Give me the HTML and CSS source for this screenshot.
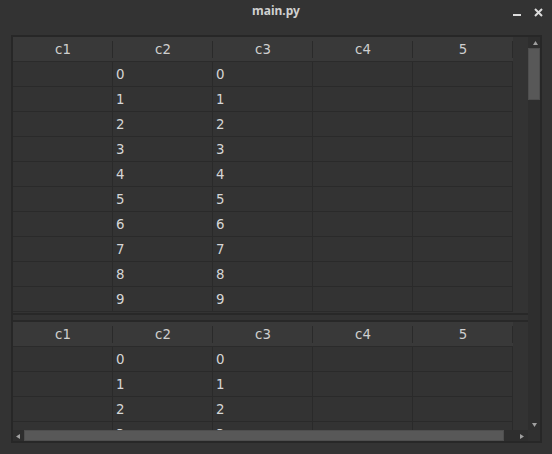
FILE: index.html
```html
<!DOCTYPE html>
<html>
<head>
<meta charset="utf-8">
<link rel="stylesheet" href="styles.css">
</head>
<body>
<div class="titlebar">
  <div class="tb-side"></div>
  <div class="tb-title">main.py</div>
  <div class="tb-side tb-buttons">
    <svg class="btn-min" width="8" height="2" viewBox="0 0 8 2"><rect x="0" y="0" width="8" height="2" fill="#dcdcdc"/></svg>
    <svg class="btn-close" width="9" height="9" viewBox="0 0 9 9"><path d="M1 1 L8 8 M8 1 L1 8" stroke="#dcdcdc" stroke-width="2" fill="none"/></svg>
  </div>
</div>
<div class="frame">
  <div class="viewport">
    <div class="table first">
      <div class="hdr">
        <div class="hcell">c1</div><div class="hcell">c2</div><div class="hcell">c3</div><div class="hcell">c4</div><div class="hcell">5</div>
      </div>
      <div class="row"><div class="cell"></div><div class="cell">0</div><div class="cell">0</div><div class="cell"></div><div class="cell"></div></div>
      <div class="row"><div class="cell"></div><div class="cell">1</div><div class="cell">1</div><div class="cell"></div><div class="cell"></div></div>
      <div class="row"><div class="cell"></div><div class="cell">2</div><div class="cell">2</div><div class="cell"></div><div class="cell"></div></div>
      <div class="row"><div class="cell"></div><div class="cell">3</div><div class="cell">3</div><div class="cell"></div><div class="cell"></div></div>
      <div class="row"><div class="cell"></div><div class="cell">4</div><div class="cell">4</div><div class="cell"></div><div class="cell"></div></div>
      <div class="row"><div class="cell"></div><div class="cell">5</div><div class="cell">5</div><div class="cell"></div><div class="cell"></div></div>
      <div class="row"><div class="cell"></div><div class="cell">6</div><div class="cell">6</div><div class="cell"></div><div class="cell"></div></div>
      <div class="row"><div class="cell"></div><div class="cell">7</div><div class="cell">7</div><div class="cell"></div><div class="cell"></div></div>
      <div class="row"><div class="cell"></div><div class="cell">8</div><div class="cell">8</div><div class="cell"></div><div class="cell"></div></div>
      <div class="row"><div class="cell"></div><div class="cell">9</div><div class="cell">9</div><div class="cell"></div><div class="cell"></div></div>
    </div>
    <div class="table second">
      <div class="hdr">
        <div class="hcell">c1</div><div class="hcell">c2</div><div class="hcell">c3</div><div class="hcell">c4</div><div class="hcell">5</div>
      </div>
      <div class="row"><div class="cell"></div><div class="cell">0</div><div class="cell">0</div><div class="cell"></div><div class="cell"></div></div>
      <div class="row"><div class="cell"></div><div class="cell">1</div><div class="cell">1</div><div class="cell"></div><div class="cell"></div></div>
      <div class="row"><div class="cell"></div><div class="cell">2</div><div class="cell">2</div><div class="cell"></div><div class="cell"></div></div>
      <div class="row"><div class="cell"></div><div class="cell">3</div><div class="cell">3</div><div class="cell"></div><div class="cell"></div></div>
    </div>
  </div>
  <div class="vbar">
    <div class="arrow-box up"><svg width="5" height="4" viewBox="0 0 5 4"><path d="M2.5 0 L5 4 L0 4 Z" fill="#a0a0a0"/></svg></div>
    <div class="vhandle"></div>
    <div class="spacer"></div>
    <div class="arrow-box down"><svg width="5" height="4" viewBox="0 0 5 4"><path d="M0 0 L5 0 L2.5 4 Z" fill="#a0a0a0"/></svg></div>
  </div>
  <div class="hbar">
    <div class="arrow-box left"><svg width="4" height="5" viewBox="0 0 4 5"><path d="M0 2.5 L4 0 L4 5 Z" fill="#a0a0a0"/></svg></div>
    <div class="hhandle"></div>
    <div class="spacer"></div>
    <div class="arrow-box right"><svg width="4" height="5" viewBox="0 0 4 5"><path d="M0 0 L4 2.5 L0 5 Z" fill="#a0a0a0"/></svg></div>
  </div>
  <div class="corner"></div>
</div>
</body>
</html>
```
FILE: styles.css
```css
html, body {
  margin: 0;
  padding: 0;
}
body {
  width: 552px;
  height: 454px;
  overflow: hidden;
  background: #333333;
  font-family: "DejaVu Sans", "Liberation Sans", sans-serif;
  color: #d4d4d4;
}
.titlebar {
  height: 35px;
  display: grid;
  grid-template-columns: 1fr auto 1fr;
}
.tb-title {
  font-family: "Noto Sans", "DejaVu Sans", sans-serif;
  font-weight: 700;
  font-size: 12px;
  line-height: 16px;
  padding-top: 3px;
  color: #d0d0d0;
}
.tb-buttons {
  display: flex;
  justify-content: flex-end;
  align-items: flex-start;
  gap: 13px;
  padding-right: 9px;
}
.btn-min {
  display: block;
  margin-top: 14px;
}
.btn-close {
  display: block;
  margin-top: 8px;
}
.frame {
  margin: 0 10px 0 11px;
  border: 2px solid #272727;
  height: 404px;
  display: grid;
  grid-template-columns: 515px 12px;
  grid-template-rows: 393px 11px;
}
.viewport {
  overflow: hidden;
  background: #333333;
}
.table {
  display: flex;
  flex-direction: column;
}
.table.first {
  padding-bottom: 1px;
  border-bottom: 2px solid #282828;
  margin-bottom: 5px;
}
.table.second {
  border-top: 2px solid #282828;
}
.hdr {
  display: flex;
  height: 24px;
  border-bottom: 1px solid #2b2b2b;
  width: 500px;
  background: #393939;
}
.hcell {
  width: 100px;
  box-sizing: border-box;
  text-align: center;
  font-size: 13.33px;
  line-height: 24px;
  padding-top: 1px;
  color: #cfcfcf;
  background-image: linear-gradient(#2a2a2a, #2a2a2a);
  background-size: 1px 17px;
  background-repeat: no-repeat;
  background-position: right 4px;
}
.row {
  display: flex;
  width: 500px;
}
.cell {
  width: 100px;
  height: 25px;
  box-sizing: border-box;
  border-right: 1px solid #2a2a2a;
  border-bottom: 1px solid #2a2a2a;
  padding-left: 3px;
  padding-top: 1px;
  font-size: 13.33px;
  line-height: 23px;
  color: #d6d6d6;
}
.vbar {
  background: #2e2e2e;
  display: flex;
  flex-direction: column;
}
.vhandle {
  height: 52px;
  box-sizing: border-box;
  background: #585858;
  border: 1px solid #4e4e4e;
}
.spacer {
  flex: 1;
}
.arrow-box {
  display: flex;
}
.arrow-box svg {
  display: block;
}
.arrow-box.up {
  height: 11px;
  padding-left: 5px;
  padding-top: 4px;
  box-sizing: border-box;
}
.arrow-box.down {
  height: 7px;
  padding-left: 4px;
  box-sizing: border-box;
}
.hbar {
  background: #2e2e2e;
  display: flex;
  align-items: stretch;
}
.hhandle {
  width: 480px;
  box-sizing: border-box;
  background: #585858;
  border: 1px solid #4e4e4e;
}
.arrow-box.left {
  width: 11px;
  padding-left: 3px;
  padding-top: 4px;
  box-sizing: border-box;
}
.arrow-box.right {
  width: 8px;
  padding-top: 4px;
  box-sizing: border-box;
}
.corner {
  background: #303030;
}
```
